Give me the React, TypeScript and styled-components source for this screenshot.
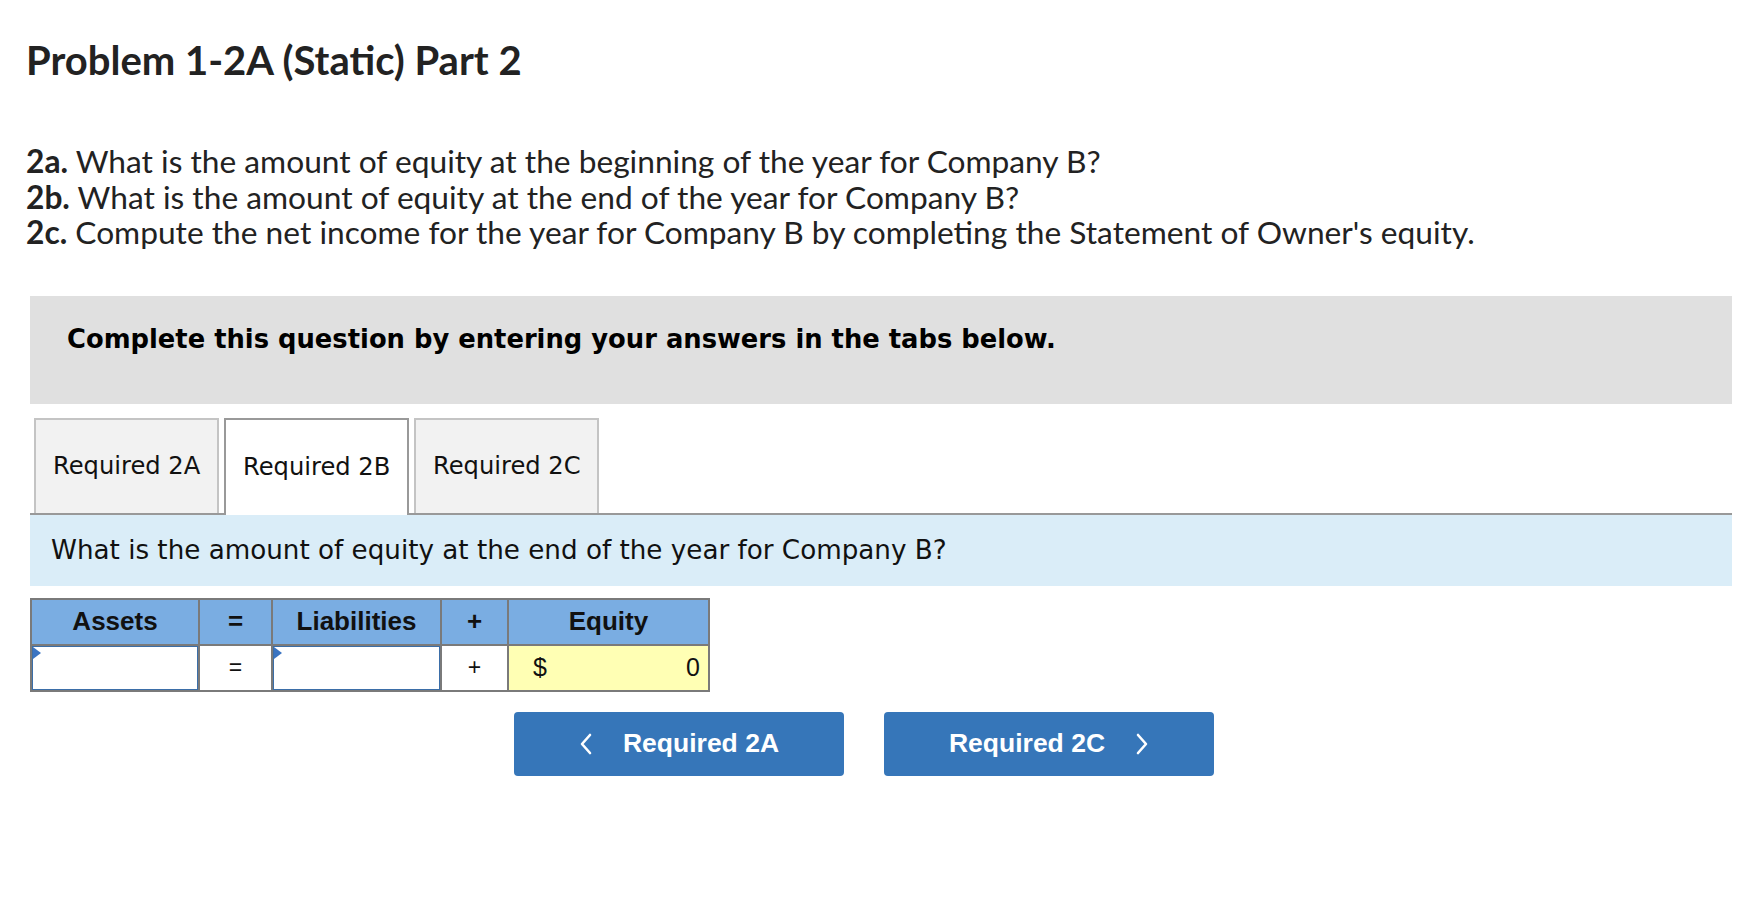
import React from "react";
import styled, { createGlobalStyle } from "styled-components";

const GlobalStyle = createGlobalStyle`
  html, body {
    margin: 0;
    padding: 0;
    background: #ffffff;
  }
  * {
    box-sizing: border-box;
  }
`;

const Page = styled.div`
  padding: 38px 16px 40px 26px;
  color: #222222;
`;

const Title = styled.h1`
  margin: 0;
  font-family: Lato, "Open Sans", sans-serif;
  font-weight: 700;
  font-size: 40px;
  line-height: 44px;
  color: #222222;
`;

const Questions = styled.div`
  margin-top: 62px;
  font-family: Lato, "Open Sans", sans-serif;
  font-size: 31.7px;
  line-height: 35.5px;
  color: #222222;
`;

const QuestionLine = styled.div`
  b {
    font-weight: 700;
  }
`;

const Banner = styled.div`
  margin: 45px 0 0 4px;
  height: 108px;
  padding: 27px 37px;
  background: #e0e0e0;
  font-family: "DejaVu Sans", Verdana, sans-serif;
  font-weight: 700;
  font-size: 25.8px;
  line-height: 32px;
  color: #000000;
`;

const TabRow = styled.div`
  margin: 14px 0 0 4px;
  padding-left: 4px;
  display: flex;
  gap: 5px;
  border-bottom: 2px solid #999999;
`;

const Tab = styled.div<{ active?: boolean }>`
  width: 185px;
  display: flex;
  align-items: center;
  padding-left: 17px;
  font-family: "DejaVu Sans", Verdana, sans-serif;
  font-size: 24.2px;
  color: #111111;
  background: ${({ active }) => (active ? "#ffffff" : "#f2f2f2")};
  border: 2px solid ${({ active }) => (active ? "#999999" : "#c4c4c4")};
  border-bottom: 0;
  margin-bottom: ${({ active }) => (active ? "-2px" : "0")};
  height: ${({ active }) => (active ? "97px" : "95px")};
`;

const Prompt = styled.div`
  margin-left: 4px;
  height: 71px;
  display: flex;
  align-items: center;
  padding-left: 21px;
  background: #daedf8;
  font-family: "DejaVu Sans", Verdana, sans-serif;
  font-size: 26.2px;
  color: #111111;
`;

const Table = styled.table`
  margin: 12px 0 0 4px;
  border-collapse: collapse;
  font-family: "Liberation Sans", Arial, sans-serif;
  color: #111111;
`;

const HeadCell = styled.th<{ w: number }>`
  width: ${({ w }) => w}px;
  height: 46px;
  padding: 0;
  background: #7aade2;
  border: 2px solid #7a7a7a;
  font-size: 26px;
  font-weight: 700;
  text-align: center;
`;

const SignCell = styled.td`
  height: 46px;
  padding: 0;
  border: 2px solid #7a7a7a;
  background: #ffffff;
  font-size: 23px;
  text-align: center;
`;

const InputCell = styled.td`
  position: relative;
  height: 46px;
  padding: 0;
  border: 2px solid #7a7a7a;
  background: #ffffff;
  box-shadow: inset 0 0 0 1px #3b6ea8;

  &::before {
    content: "";
    position: absolute;
    top: 1px;
    left: 1px;
    border-top: 6px solid transparent;
    border-bottom: 6px solid transparent;
    border-left: 8px solid #3a74c2;
  }
`;

const AmountCell = styled.td`
  height: 46px;
  padding: 0 8px 0 24px;
  border: 2px solid #7a7a7a;
  background: #ffffb4;
  font-size: 25px;
`;

const AmountInner = styled.div`
  display: flex;
  justify-content: space-between;
  align-items: center;
`;

const NavRow = styled.div`
  margin-top: 20px;
  padding-right: 30px;
  display: flex;
  justify-content: center;
  gap: 40px;
`;

const NavButton = styled.button`
  width: 330px;
  height: 64px;
  display: flex;
  align-items: center;
  justify-content: center;
  gap: 30px;
  border: none;
  border-radius: 4px;
  background: #3676b9;
  color: #ffffff;
  font-family: "Liberation Sans", Arial, sans-serif;
  font-weight: 700;
  font-size: 26.5px;
  cursor: pointer;
`;

const Chevron = ({ dir }: { dir: "left" | "right" }) => (
  <svg width="14" height="22" viewBox="0 0 14 22" fill="none">
    <path
      d={dir === "left" ? "M11 2 L3 11 L11 20" : "M3 2 L11 11 L3 20"}
      stroke="#ffffff"
      strokeWidth="2.6"
      strokeLinecap="round"
      strokeLinejoin="round"
    />
  </svg>
);

const App: React.FC = () => {
  return (
    <Page>
      <GlobalStyle />
      <Title>Problem 1-2A (Static) Part 2</Title>
      <Questions>
        <QuestionLine>
          <b>2a.</b> What is the amount of equity at the beginning of the year for Company B?
        </QuestionLine>
        <QuestionLine>
          <b>2b.</b> What is the amount of equity at the end of the year for Company B?
        </QuestionLine>
        <QuestionLine>
          <b>2c.</b> Compute the net income for the year for Company B by completing the Statement of Owner's equity.
        </QuestionLine>
      </Questions>
      <Banner>Complete this question by entering your answers in the tabs below.</Banner>
      <TabRow>
        <Tab>Required 2A</Tab>
        <Tab active>Required 2B</Tab>
        <Tab>Required 2C</Tab>
      </TabRow>
      <Prompt>What is the amount of equity at the end of the year for Company B?</Prompt>
      <Table>
        <thead>
          <tr>
            <HeadCell w={168}>Assets</HeadCell>
            <HeadCell w={73}>=</HeadCell>
            <HeadCell w={169}>Liabilities</HeadCell>
            <HeadCell w={67}>+</HeadCell>
            <HeadCell w={201}>Equity</HeadCell>
          </tr>
        </thead>
        <tbody>
          <tr>
            <InputCell />
            <SignCell>=</SignCell>
            <InputCell />
            <SignCell>+</SignCell>
            <AmountCell>
              <AmountInner>
                <span>$</span>
                <span>0</span>
              </AmountInner>
            </AmountCell>
          </tr>
        </tbody>
      </Table>
      <NavRow>
        <NavButton>
          <Chevron dir="left" />
          Required 2A
        </NavButton>
        <NavButton>
          Required 2C
          <Chevron dir="right" />
        </NavButton>
      </NavRow>
    </Page>
  );
};

export default App;
